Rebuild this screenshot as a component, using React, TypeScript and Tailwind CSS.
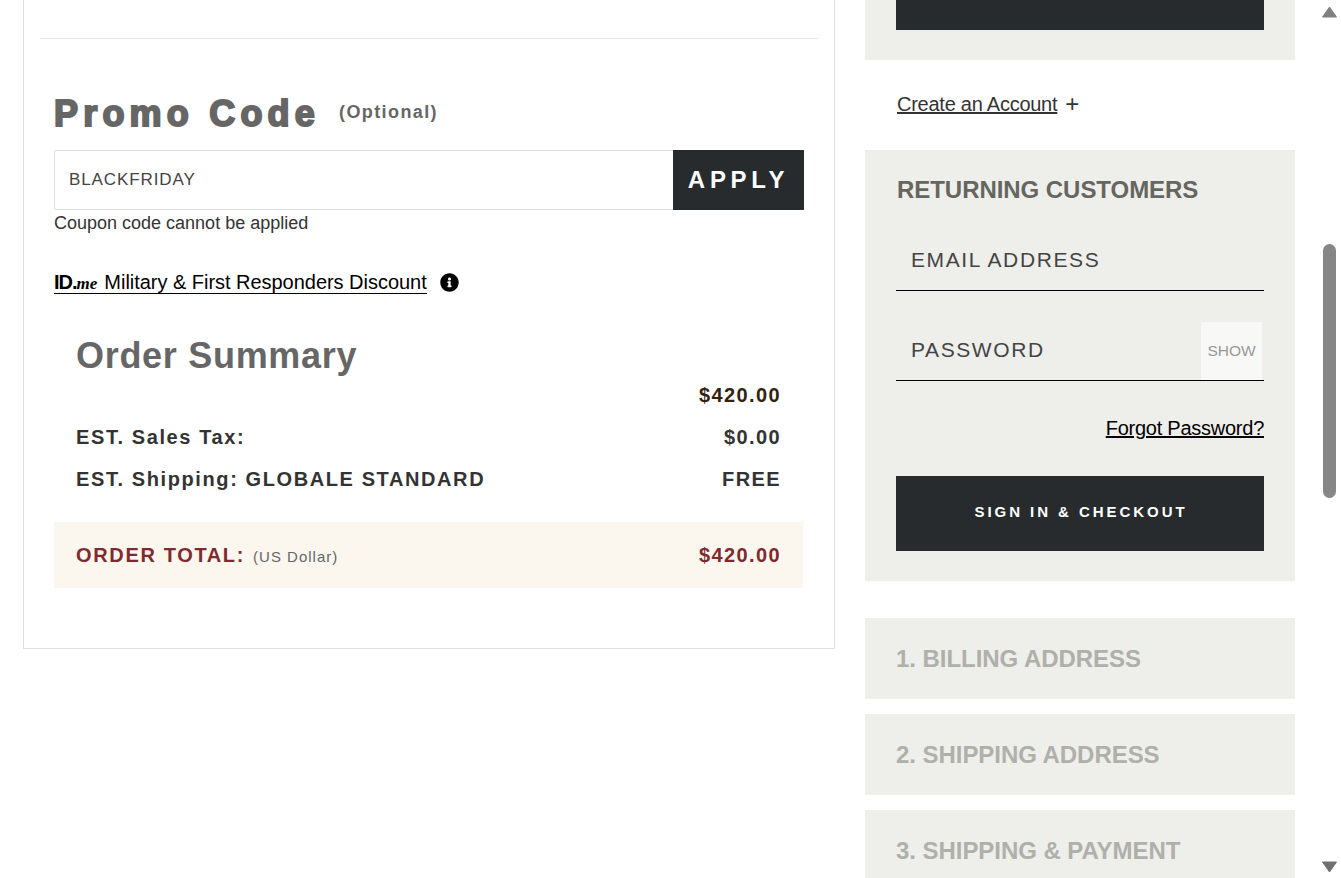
import { FaInfoCircle } from 'react-icons/fa';

const sans = '[font-family:"Liberation_Sans",Arial,sans-serif]';

function SummaryRow({ label, value }: { label: string; value: string }) {
  return (
    <div className="flex justify-between items-center h-[42px] px-[22px] text-[20px] font-bold tracking-[1.4px] text-[#333333]">
      <span className="tracking-[1.6px]">{label}</span>
      <span>{value}</span>
    </div>
  );
}

function StepBox({ title, mb }: { title: string; mb?: boolean }) {
  return (
    <div className={`h-[81px] flex items-center pl-[31px] bg-[#eeeeeb] text-[24px] font-bold text-[#b0b0aa] tracking-[-0.05px] ${mb ? 'mb-[15px]' : ''}`}>
      {title}
    </div>
  );
}

function PromoCard() {
  return (
    <div className="ml-[23px] w-[812px] h-[649px] shrink-0 bg-white border border-t-0 border-[#dddddd] px-[16px]">
      <div className="h-[39px] border-b border-[#e6e6e6]" />
      <div className="px-[14px]">
        <div className="flex items-baseline mt-[48px] h-[52px] text-[#666666]">
          <h2 className="text-[36px] font-bold tracking-[5.2px] [-webkit-text-stroke:2px_#666666]">Promo Code</h2>
          <span className="ml-[19px] text-[18px] font-bold tracking-[1.4px] relative top-[-8px]">(Optional)</span>
        </div>
        <div className="flex h-[60px] mt-[11px] w-[750px]">
          <div className="flex-1 flex items-center pl-[14px] border border-[#dddddd] border-r-0 rounded-l-[2px] text-[17px] text-[#444444] tracking-[0.9px]">
            BLACKFRIDAY
          </div>
          <button className="w-[131px] bg-[#272b2e] text-white text-[24px] font-bold tracking-[4.7px]">APPLY</button>
        </div>
        <p className="mt-[1px] text-[18px] leading-[24px] text-[#333333]">Coupon code cannot be applied</p>
        <div className="flex items-center mt-[35px] h-[24px] text-black">
          <a className="flex items-baseline border-b border-black h-[24px] leading-[24px] text-[20px] tracking-[-0.03px]">
            <span className="font-bold tracking-[-1px]">ID.</span>
            <span className={`font-bold italic text-[17px] mr-[7px] tracking-[0px] [font-family:"Liberation_Serif",serif]`}>me</span>
            Military &amp; First Responders Discount
          </a>
          <FaInfoCircle className="ml-[13px] w-[19px] h-[19px]" />
        </div>
      </div>
      <div className="pl-[14px] w-[763px]">
        <h2 className="mt-[39px] h-[46px] px-[22px] text-[36px] leading-[46px] font-bold tracking-[0.7px] text-[#666666]">Order Summary</h2>
        <div className="flex justify-end items-center h-[32px] px-[22px] text-[20px] font-bold tracking-[1.4px] text-[#33220f]">
          $420.00
        </div>
        <div className="mt-[5px]">
          <SummaryRow label="EST. Sales Tax:" value="$0.00" />
          <SummaryRow label="EST. Shipping: GLOBALE STANDARD" value="FREE" />
        </div>
        <div className="mt-[22px] h-[66px] flex justify-between items-center px-[22px] bg-[#fbf7ef] font-bold text-[20px] tracking-[1.4px] text-[#7f2a2e]">
          <span className="flex items-baseline tracking-[1.65px]">
            ORDER TOTAL:
            <span className="ml-[8px] text-[15px] font-normal tracking-[1px] text-[#666666]">(US Dollar)</span>
          </span>
          <span>$420.00</span>
        </div>
      </div>
    </div>
  );
}

function CheckoutColumn() {
  return (
    <div className="ml-[30px] w-[430px] shrink-0">
      <div className="h-[60px] bg-[#eeeeeb] px-[31px]">
        <div className="h-[30px] w-[368px] bg-[#272b2e]" />
      </div>
      <div className="h-[90px] pl-[32px] pb-[2px] flex items-center text-[20px] tracking-[-0.25px] text-[#333333]">
        <a className="underline">Create an Account</a>
        <span className="ml-[8px] text-[24px] leading-none">+</span>
      </div>
      <div className="h-[431px] bg-[#eeeeeb] px-[31px]">
        <h3 className="pt-[25px] pl-[1px] text-[24px] leading-[30px] font-bold tracking-[-0.05px] text-[#666660]">RETURNING CUSTOMERS</h3>
        <div className="mt-[26px] h-[60px] w-[368px] flex items-center pl-[15px] pb-[2px] border-b border-black text-[21px] tracking-[1.6px] text-[#444444]">
          EMAIL ADDRESS
        </div>
        <div className="mt-[30px] h-[60px] w-[368px] flex items-end border-b border-black text-[21px] tracking-[1.6px] text-[#444444]">
          <span className="pl-[15px] pb-[2px] self-center flex-1">PASSWORD</span>
          <span className="w-[61px] mr-[2px] h-[58px] bg-[#f8f8f7] flex items-center justify-center text-[15.5px] tracking-normal text-[#999999]">SHOW</span>
        </div>
        <div className="mt-[35px] w-[368px] text-right text-[20px] leading-[24px] tracking-[-0.25px] text-black">
          <a className="underline">Forgot Password?</a>
        </div>
        <button className="mt-[36px] w-[368px] h-[75px] pb-[2px] pl-[2px] bg-[#272b2e] text-white text-[15px] font-bold tracking-[2.95px]">
          SIGN IN &amp; CHECKOUT
        </button>
      </div>
      <div className="mt-[37px]">
        <StepBox title="1. BILLING ADDRESS" mb />
        <StepBox title="2. SHIPPING ADDRESS" mb />
        <StepBox title="3. SHIPPING & PAYMENT" />
      </div>
    </div>
  );
}

function Scrollbar() {
  return (
    <div className="absolute top-0 right-[3px] w-[17px] h-[878px] bg-white flex flex-col items-center">
      <svg className="mt-[6px] shrink-0" width="15" height="12" viewBox="0 0 15 12">
        <path d="M7.5 1 L14.5 11 L0.5 11 Z" fill="#808080" stroke="#808080" strokeLinejoin="round" />
      </svg>
      <div className="mt-[226px] w-[13px] h-[254px] rounded-[7px] bg-[#868686] shrink-0" />
      <svg className="mt-[363px] shrink-0" width="15" height="12" viewBox="0 0 15 12">
        <path d="M0.5 1 L14.5 1 L7.5 11 Z" fill="#6f6f6f" stroke="#6f6f6f" strokeLinejoin="round" />
      </svg>
    </div>
  );
}

export default function App() {
  return (
    <div className={`relative w-[1341px] h-[878px] overflow-hidden bg-white flex items-start ${sans}`}>
      <PromoCard />
      <CheckoutColumn />
      <Scrollbar />
    </div>
  );
}
